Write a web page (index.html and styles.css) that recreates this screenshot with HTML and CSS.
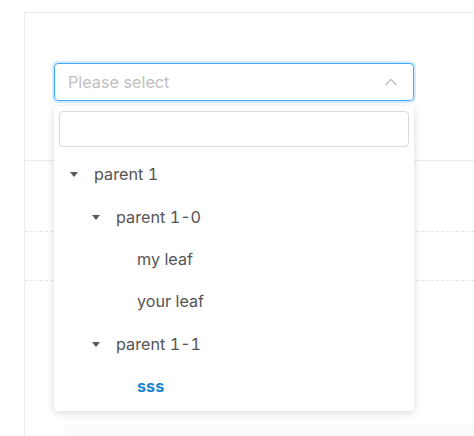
FILE: index.html
```html
<!DOCTYPE html>
<html>
<head>
<meta charset="utf-8">
<link rel="stylesheet" href="styles.css">
</head>
<body>
<div class="page">
  <div class="card">
    <div class="field">
      <div class="select">
        <span class="placeholder">Please select</span>
        <svg class="chev" width="14" height="10" viewBox="0 0 14 10"><path d="M1.5 8 L7 2.5 L12.5 8" fill="none" stroke="#bfbfbf" stroke-width="1.3"/></svg>
      </div>
      <div class="dropdown">
        <div class="search"></div>
        <ul class="tree">
          <li class="row lvl1"><span class="caret"></span><span class="label">parent 1</span></li>
          <li class="row lvl2"><span class="caret"></span><span class="label">parent 1-0</span></li>
          <li class="row lvl3"><span class="label">my leaf</span></li>
          <li class="row lvl3"><span class="label">your leaf</span></li>
          <li class="row lvl2"><span class="caret"></span><span class="label">parent 1-1</span></li>
          <li class="row lvl3"><span class="label selected">sss</span></li>
        </ul>
      </div>
    </div>
    <div class="line solid"></div>
    <div class="line dashed first"></div>
    <div class="line dashed second"></div>
    <div class="footer"></div>
  </div>
</div>
</body>
</html>
```
FILE: styles.css
```css
html, body {
  margin: 0;
  padding: 0;
  background: #fff;
  font-family: Inter, "Liberation Sans", Arial, sans-serif;
  overflow: hidden;
}
.page {
  padding: 12px 0 0 24px;
  height: 436px;
  box-sizing: border-box;
}
.card {
  border-left: 1px solid #ececec;
  border-top: 1px solid #ececec;
  height: 100%;
  box-sizing: border-box;
}
.field {
  position: relative;
  margin: 50px 0 0 29px;
  width: 360px;
}
.select {
  height: 38px;
  box-sizing: border-box;
  border: 1px solid #40a9ff;
  border-radius: 4px;
  box-shadow: 0 0 0 2px rgba(24, 144, 255, 0.18);
  display: flex;
  align-items: center;
  justify-content: space-between;
  padding: 0 15px 0 13px;
}
.placeholder {
  color: #bfbfbf;
  font-size: 16.2px;
}
.chev {
  display: block;
}
.dropdown {
  position: absolute;
  top: 43px;
  left: 0;
  width: 360px;
  background: #fff;
  border-radius: 4px;
  box-shadow: 0 2px 8px rgba(0, 0, 0, 0.15);
  padding: 5px 5px 4px;
  box-sizing: border-box;
  z-index: 2;
}
.search {
  height: 36px;
  border: 1px solid #d9d9d9;
  border-radius: 4px;
  box-sizing: border-box;
}
.tree {
  list-style: none;
  margin: 6px 0 0;
  padding: 0;
}
.row {
  height: 42.4px;
  display: flex;
  align-items: center;
  font-size: 16.2px;
  color: #555;
  font-feature-settings: "tnum" 1;
}
.lvl1 { padding-left: 11px; }
.lvl2 { padding-left: 33px; }
.lvl3 { padding-left: 78px; }
.caret {
  width: 0;
  height: 0;
  border-left: 4px solid transparent;
  border-right: 4px solid transparent;
  border-top: 5px solid #595959;
  margin-right: 16px;
  margin-top: 1px;
}
.selected {
  color: #1a86d0;
  font-weight: bold;
}
.line {
  height: 0;
}
.solid {
  margin-top: 59px;
  border-top: 1px solid #ececec;
}
.dashed {
  border-top: 1px dashed #e6e6e6;
}
.first { margin-top: 70px; }
.second { margin-top: 48px; }
.footer {
  margin-top: 144px;
  margin-left: 40px;
  height: 12px;
  background: #fafafa;
}
```
